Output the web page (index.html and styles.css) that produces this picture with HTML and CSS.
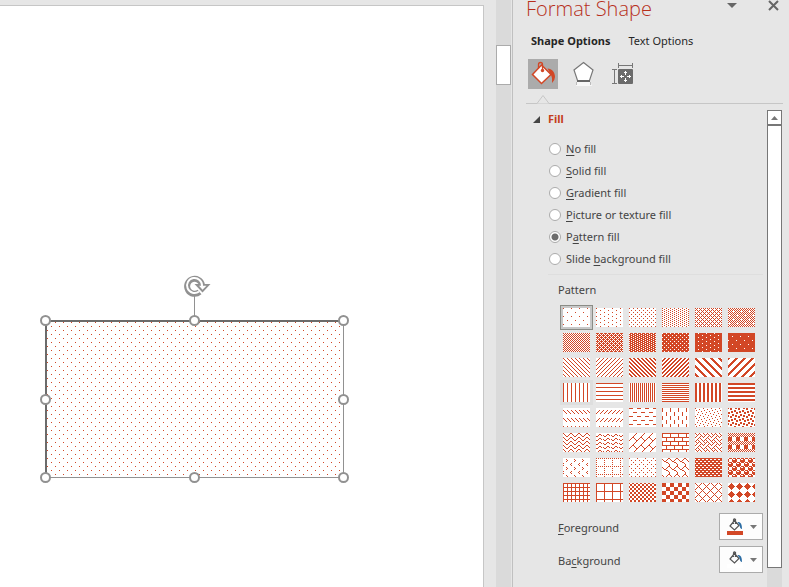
FILE: index.html
```
<!DOCTYPE html>
<html lang="en">

<head>
    <meta charset="UTF-8">
    <title>Format Shape</title>
    <link rel="stylesheet" href="styles.css">
</head>

<body>
    <div class="app">
        <main class="editor">
            <div class="slide">
                <div class="shape" id="shape">
                    <canvas class="shape-fill" id="shapeFill"></canvas>
                    <span class="rotate-line"></span>
                    <svg class="rotate" width="32" height="24" viewBox="0 0 32 24" fill="none">
                        <path d="M18.500 18A7.500 7.500 0 1 1 21 11" stroke="#919191" stroke-width="6"/>
                        <path d="M13.500 10h16l-8 8.500z" fill="#919191"/>
                        <path d="M18 17.500A7.500 7.500 0 1 1 21 12" stroke="#fff" stroke-width="2"/>
                        <path d="M18 11.800h7.500l-4 4z" fill="#fff"/>
                    </svg>
                    <i class="handle nw"></i><i class="handle n"></i><i class="handle ne"></i>
                    <i class="handle w"></i><i class="handle e"></i>
                    <i class="handle sw"></i><i class="handle s"></i><i class="handle se"></i>
                </div>
            </div>
            <div class="editor-scroll"><div class="editor-thumb"></div></div>
        </main>
        <aside class="pane">
            <header class="pane-header">
                <h1>Format Shape</h1>
                <button class="plain menu" aria-label="Task pane options"><svg width="10" height="5"><path d="M0 0h10L5 5z" fill="#666"/></svg></button>
                <button class="plain" aria-label="Close"><svg width="11" height="11"><path d="M1 1l9 9M10 1l-9 9" stroke="#666" stroke-width="2"/></svg></button>
            </header>
            <nav class="tabs">
                <button class="tab active">Shape Options</button>
                <button class="tab">Text Options</button>
            </nav>
            <div class="tools">
                <button class="tool active" aria-label="Fill &amp; Line">
                    <svg width="30" height="30" viewBox="0 0 30 30" fill="none">
                        <path d="M13.500 6L23 15.500L13.500 24.500L4.500 15.500z" fill="#fff" stroke="#d24726" stroke-width="1.500"/>
                        <path d="M10.500 9.500V5.500Q10.500 3.500 12.500 3.500T14.500 5.500V11" stroke="#d24726" stroke-width="1.300"/>
                        <circle cx="14.500" cy="11.500" r="1.700" fill="#d24726"/>
                        <path d="M19.500 9.500C24 10 27 13 27 18Q27 21 24 24Q24.500 18 22.500 15z" fill="#d24726"/>
                    </svg>
                </button>
                <button class="tool" aria-label="Effects">
                    <svg width="30" height="30" viewBox="0 0 30 30">
                        <path d="M9 22h13l2 5H8z" fill="#f7f7f7"/>
                        <path d="M8.500 23v3M22.500 23v3" stroke="#bbb"/>
                        <path d="M15.500 3.500L25 11L21.500 21.500H9.500L6 11z" fill="#fff" stroke="#777" stroke-width="1.200"/>
                        <path d="M9 22h13" stroke="#666" stroke-width="2"/>
                    </svg>
                </button>
                <button class="tool" aria-label="Size &amp; Properties">
                    <svg width="30" height="30" viewBox="0 0 30 30" fill="none">
                        <path d="M10 6.500h15M10.500 4v5M24.500 4v5M6.500 10v15M4 10.500h5M4 24.500h5" stroke="#777"/>
                        <rect x="10" y="10" width="15" height="15" rx="1" fill="#6b6b6b"/>
                        <path d="M17.500 12v4M17.500 19v4M12 17.500h4M19 17.500h4M16 13.500h3M16 21.500h3M13.500 16v3M21.500 16v3" stroke="#fff"/>
                    </svg>
                </button>
            </div>
            <svg class="divider" width="40" height="9" viewBox="0 0 40 9"><path d="M0 8.500h11l6-8 6 8h17" fill="#e6e6e6" stroke="#c6c6c6"/></svg>
            <div class="pane-body">
                <div class="options">
                    <button class="section"><svg width="7" height="7"><path d="M7 0v7H0z" fill="#444"/></svg>Fill</button>
                    <div class="radios">
                        <label><input type="radio" name="fill"><span><u>N</u>o fill</span></label>
                        <label><input type="radio" name="fill"><span><u>S</u>olid fill</span></label>
                        <label><input type="radio" name="fill"><span><u>G</u>radient fill</span></label>
                        <label><input type="radio" name="fill"><span><u>P</u>icture or texture fill</span></label>
                        <label><input type="radio" name="fill" checked><span>P<u>a</u>ttern fill</span></label>
                        <label><input type="radio" name="fill"><span>Slide <u>b</u>ackground fill</span></label>
                    </div>
                    <div class="pattern">
                        <h2>Pattern</h2>
                        <div class="swatches" id="swatches"></div>
                        <div class="color-row">
                            <label for="foreground"><u>F</u>oreground</label>
                            <button class="color" id="foreground">
                                <svg width="18" height="18" viewBox="0 0 18 18" fill="none">
                                    <path d="M8.500 2.500L13 7.500L8.500 12L4 8zM7.500 6V2Q8 0 9.500 1.500V6" stroke="#555" stroke-width="1.200"/>
                                    <path d="M11.500 4Q16 3 16 11Q14 11 13.500 7z" fill="#2b6ca3"/>
                                    <path d="M1 13h16v4H1z" fill="#d24726"/>
                                </svg>
                                <svg width="7" height="4"><path d="M0 0h7L3.500 4z" fill="#777"/></svg>
                            </button>
                        </div>
                        <div class="color-row">
                            <label for="background">Ba<u>c</u>kground</label>
                            <button class="color" id="background">
                                <svg width="18" height="18" viewBox="0 0 18 18" fill="none">
                                    <path d="M8.500 2.500L13 7.500L8.500 12L4 8zM7.500 6V2Q8 0 9.500 1.500V6" stroke="#555" stroke-width="1.200"/>
                                    <path d="M11.500 4Q16 3 16 11Q14 11 13.500 7z" fill="#2b6ca3"/>
                                    <path d="M1 13h16v4H1z" fill="#fff"/>
                                </svg>
                                <svg width="7" height="4"><path d="M0 0h7L3.500 4z" fill="#777"/></svg>
                            </button>
                        </div>
                    </div>
                </div>
                <div class="pane-scroll">
                    <button class="scroll-up" aria-label="Scroll up"><svg width="7" height="4"><path d="M0 4h7L3.500 0z" fill="#777"/></svg></button>
                    <div class="pane-thumb"></div>
                </div>
            </div>
        </aside>
    </div>
    <script src="patterns.js"></script>
</body>

</html>
```
FILE: styles.css
```
* {
  box-sizing: border-box;
}

body {
  margin: 0;
  background: #e6e6e6;
  color: #444;
  font: 11px/22px "Noto Sans", "Open Sans", sans-serif;
}

button {
  padding: 0;
  border: 0;
  background: none;
  color: inherit;
  font: inherit;
}

svg {
  display: block;
}

.app {
  height: 100vh;
  display: flex;
  overflow: hidden;
}

/* slide area */
.editor {
  flex: 1;
  display: flex;
  gap: 12px;
}
.slide {
  flex: 1;
  position: relative;
  margin-top: 5px;
  background: #fff;
  border-top: 1px solid #c6c6c6;
  border-right: 1px solid #c6c6c6;
}
.editor-scroll {
  width: 15px;
  padding-top: 45px;
  background: #dadada;
}
.editor-thumb {
  height: 40px;
  background: #fff;
  border: 1px solid #ababab;
}

.shape {
  position: absolute;
  left: 45px;
  top: 314px;
  width: 298px;
  height: 157px;
}
.shape-fill {
  display: block;
  width: calc(100% + 1px);
  height: calc(100% + 1px);
  border: 1px solid #919191;
  border-top: 2px solid #6b6b6b;
  border-left: 2px solid #6b6b6b;
}
.handle {
  position: absolute;
  width: 11px;
  height: 11px;
  margin: -5px;
  background: #fff;
  border: 2px solid #919191;
  border-radius: 50%;
}
.nw, .n, .ne { top: 0; }
.w, .e { top: 50%; }
.sw, .s, .se { top: 100%; }
.nw, .w, .sw { left: 0; }
.n, .s { left: 50%; }
.ne, .e, .se { left: 100%; }
.rotate-line {
  position: absolute;
  left: 50%;
  bottom: 100%;
  width: 1px;
  height: 26px;
  background: #919191;
}
.rotate {
  position: absolute;
  left: 50%;
  bottom: 100%;
  margin: 0 0 22px -13px;
}

/* task pane */
.pane {
  width: 277px;
  margin-left: 1px;
  padding: 0 6px 0 13px;
  display: flex;
  flex-direction: column;
  border-left: 1px solid #c0c0c0;
}
.pane-header {
  height: 30px;
  display: flex;
  align-items: flex-start;
  padding-right: 4px;
}
.pane-header h1 {
  flex: 1;
  margin: 0;
  color: #b7301c;
  font: 300 20px/18px "Open Sans", "Noto Sans", sans-serif;
}
.plain {
  height: 11px;
  display: flex;
  align-items: center;
}
.menu {
  margin-right: 31px;
}
.tabs {
  display: flex;
  gap: 18px;
  padding-left: 5px;
}
.tab {
  color: #262626;
}
.tab.active {
  font-weight: 700;
}
.tools {
  display: flex;
  gap: 10px;
  margin-top: 7px;
  padding-left: 2px;
}
.tool {
  width: 30px;
  height: 30px;
}
.tool.active {
  background: #ababab;
}
.divider {
  position: relative;
  margin-top: 6px;
}
.pane-body {
  flex: 1;
  display: flex;
  min-height: 0;
  margin-top: -1px;
  padding: 6px 1px 0 0;
  border-top: 1px solid #c6c6c6;
}
.options {
  flex: 1;
  margin-right: 4px;
}
.section {
  display: flex;
  align-items: center;
  gap: 8px;
  height: 18px;
  padding-left: 7px;
  color: #c43e1c;
  font-weight: 700;
}
.radios {
  margin-left: 22px;
  padding: 10px 0 4px 1px;
  border-bottom: 1px solid #dedede;
}
.radios label {
  display: flex;
  align-items: center;
  gap: 5px;
}
.radios input {
  appearance: none;
  width: 12px;
  height: 12px;
  margin: 0;
  border: 1px solid #ababab;
  border-radius: 50%;
  background: #fff;
}
.radios input:checked {
  background: radial-gradient(circle, #6b6b6b 3px, #fff 4px);
}
u {
  text-underline-offset: 2px;
}

.pattern {
  padding-left: 32px;
}
.pattern h2 {
  margin: 4px 0;
  font: inherit;
}
.swatches {
  display: grid;
  grid-template-columns: repeat(6, 33px);
  margin-left: 2px;
}
.swatch {
  height: 25px;
  padding: 3px;
}
.swatch canvas {
  display: block;
}
.swatch.selected {
  padding: 2px;
  background: #c8c8c8;
  border: 1px solid #8a8c86;
}
.swatch.hot {
  background: #dedede;
}
.color-row {
  display: flex;
  justify-content: space-between;
  align-items: center;
  height: 27px;
  margin-top: 6px;
}
.color-row label {
  padding-top: 2px;
}
.swatches + .color-row {
  margin-top: 8px;
}
.color {
  width: 44px;
  height: 27px;
  display: flex;
  align-items: center;
  justify-content: center;
  gap: 6px;
  background: #fdfdfd;
  border: 1px solid #ababab;
}

.pane-scroll {
  width: 15px;
  display: flex;
  flex-direction: column;
  background: #dadada;
}
.scroll-up {
  height: 15px;
  display: flex;
  align-items: center;
  justify-content: center;
  background: #fff;
  border: 1px solid #777;
}
.pane-thumb {
  flex: 1;
  margin-bottom: 19px;
  background: #fff;
  border: 1px solid #777;
}
```
FILE: patterns.js
```
// 8x8 hatch bitmaps, one byte per row, leftmost pixel in the high bit
var patterns = {
    'Dotted: 5%': '8000000008000000',
    'Dotted: 10%': '8000080080000800',
    'Dotted: 20%': '8800220088002200',
    'Dotted: 25%': '8822882288228822',
    'Dotted: 30%': 'aa44aa11aa44aa11',
    'Dotted: 40%': 'aa55aa51aa55aa15',
    'Dotted: 50%': 'aa55aa55aa55aa55',
    'Dotted: 60%': 'ee55bb55ee55bb55',
    'Dotted: 70%': '77dd77dd77dd77dd',
    'Dotted: 75%': '77ffddff77ffddff',
    'Dotted: 80%': 'effffeffeffffeff',
    'Dotted: 90%': 'fffffff7ffffff7f',
    'Light downward diagonal': '8844221188442211',
    'Light upward diagonal': '1122448811224488',
    'Dark downward diagonal': 'cc663399cc663399',
    'Dark upward diagonal': '3366cc993366cc99',
    'Wide downward diagonal': 'c1e070381c0e0783',
    'Wide upward diagonal': 'c183070e1c3870e0',
    'Light vertical': '8888888888888888',
    'Light horizontal': 'ff000000ff000000',
    'Narrow vertical': '5555555555555555',
    'Narrow horizontal': 'ff00ff00ff00ff00',
    'Dark vertical': 'cccccccccccccccc',
    'Dark horizontal': 'ffff0000ffff0000',
    'Dashed downward diagonal': '0000884422110000',
    'Dashed upward diagonal': '0000112244880000',
    'Dashed horizontal': 'f00000000f000000',
    'Dashed vertical': '8080808008080808',
    'Small confetti': '8008400210012004',
    'Large confetti': 'b130031bd8c00c8d',
    'Zig zag': '8142241881422418',
    'Wave': '001825c0001825c0',
    'Diagonal brick': '0102040818244281',
    'Horizontal brick': 'ff808080ff080808',
    'Weave': '8854224588142251',
    'Plaid': 'aa55aa55f0f0f0f0',
    'Divot': '0010081000800180',
    'Dotted grid': 'aa00800080008000',
    'Dotted diamond': '8000220008002200',
    'Shingle': '038448300c020101',
    'Trellis': 'ff66ff99ff66ff99',
    'Sphere': '77898f8f7798f8f8',
    'Small grid': 'ff888888ff888888',
    'Large grid': 'ff80808080808080',
    'Small checker board': '9966669999666699',
    'Large checker board': 'f0f0f0f00f0f0f0f',
    'Outlined diamond': '8244281028448201',
    'Solid diamond': '10387cfe7c381000'
};

function paint(canvas, bits, width, height) {
    canvas.width = width;
    canvas.height = height;
    var ctx = canvas.getContext('2d');
    ctx.fillStyle = '#fff';
    ctx.fillRect(0, 0, width, height);
    ctx.fillStyle = '#d24726';
    for (var y = 0; y < height; y++) {
        var row = parseInt(bits.substr(y % 8 * 2, 2), 16);
        for (var x = 0; x < width; x++) {
            if (row & (128 >> x % 8)) {
                ctx.fillRect(x, y, 1, 1);
            }
        }
    }
}

var swatches = document.getElementById('swatches');
var shapeFill = document.getElementById('shapeFill');

function paintShape(bits) {
    paint(shapeFill, bits, shapeFill.clientWidth, shapeFill.clientHeight);
}

Object.keys(patterns).forEach(function(name) {
    var button = document.createElement('button');
    var canvas = document.createElement('canvas');
    button.className = 'swatch';
    button.setAttribute('aria-label', name);
    paint(canvas, patterns[name], 27, 19);
    button.appendChild(canvas);
    button.addEventListener('click', function() {
        swatches.querySelector('.selected').classList.remove('selected');
        button.classList.add('selected');
        paintShape(patterns[name]);
    });
    swatches.appendChild(button);
});

swatches.children[0].classList.add('selected');
swatches.children[18].classList.add('hot');
paintShape(patterns['Dotted: 5%']);
```
